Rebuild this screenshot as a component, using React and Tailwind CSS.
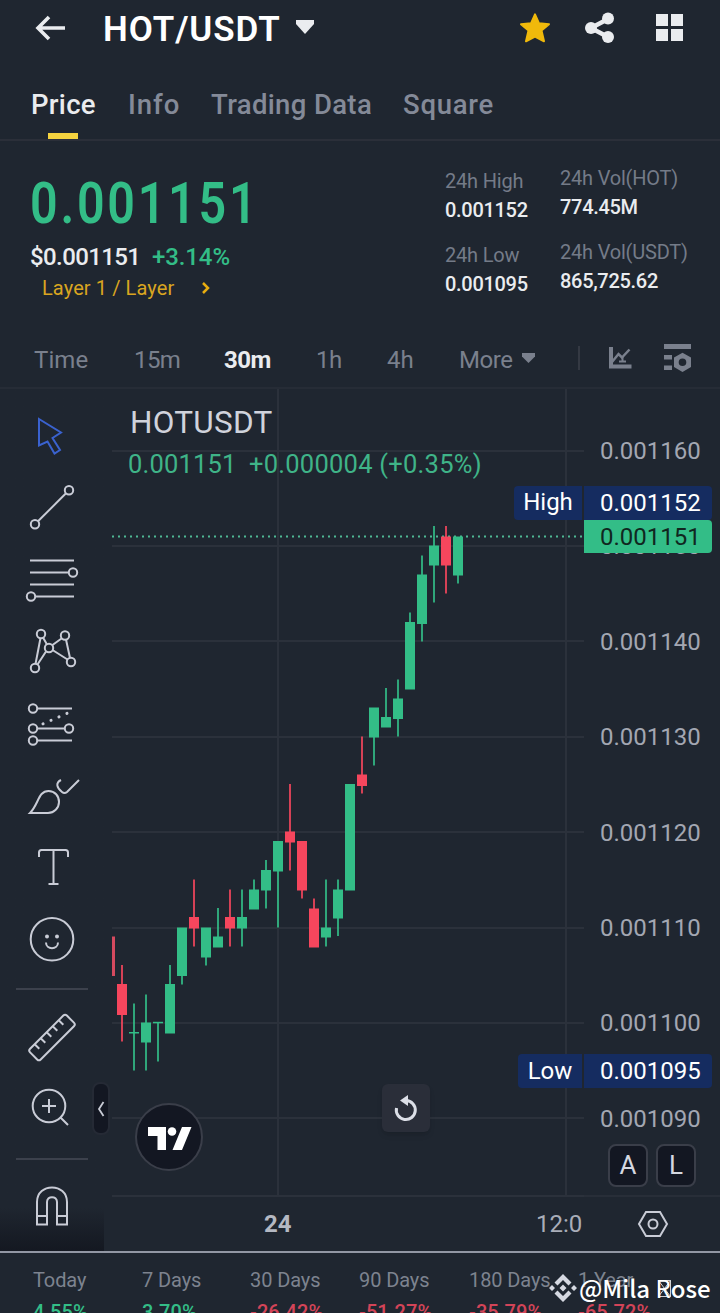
import React from "react";

const UP = "#33bd87";
const DOWN = "#f6465d";

// x, wick top, wick bottom, body top, body bottom, rising
const candles = [
  [122, 965, 1041.5, 984, 1015, 0],
  [134, 1003.5, 1070.5, 1032, 1033.5, 1],
  [146, 994.5, 1070.5, 1022.5, 1042.5, 1],
  [158, 1022, 1061.5, 1021.8, 1023.3, 1],
  [170, 965, 1033, 984, 1033.5, 1],
  [182, 928, 984.5, 927.5, 976, 1],
  [194, 879.5, 946.5, 917, 928.5, 0],
  [206, 928, 965.5, 927.5, 957.5, 1],
  [218, 908, 947, 936.5, 947.5, 1],
  [230, 889.5, 946.5, 917, 928.5, 0],
  [242, 889.5, 946.5, 917, 928.5, 1],
  [254, 879.5, 909, 889.5, 909.5, 1],
  [266, 860, 908.5, 870, 890.5, 1],
  [278, 842, 927.5, 841, 871.5, 1],
  [290, 784, 870.5, 831.5, 842.5, 0],
  [302, 842, 898.5, 841, 890.5, 0],
  [314, 898.5, 947, 908.5, 947.5, 0],
  [326, 879.5, 946.5, 927.5, 937.5, 1],
  [338, 879.5, 936, 889.5, 918.5, 1],
  [350, 785, 890, 784, 890.5, 1],
  [362, 736.5, 793.5, 774.5, 786, 0],
  [374, 708, 765.5, 707.5, 737.5, 1],
  [386, 688, 727, 717, 727.5, 1],
  [398, 679.5, 736.5, 698.5, 719, 1],
  [410, 612.5, 689, 622, 689.5, 1],
  [422, 555.5, 641.5, 574.5, 624, 1],
  [434, 526, 602.5, 545.5, 565.5, 1],
  [446, 526, 593.5, 536.5, 565.5, 0],
  [458, 537, 583.5, 536.5, 575.5, 1],
];

const levels = ["0.001160", "0.001150", "0.001140", "0.001130", "0.001120", "0.001110", "0.001100", "0.001090"];

function Header() {
  return (
    <header className="flex h-[60px] shrink-0 items-center pl-[34px] text-[#eaecef]">
      <svg className="-mt-1 mr-[37px] h-7 w-8 shrink-0" viewBox="0 0 32 28" fill="none" stroke="currentColor" strokeWidth="3.6">
        <path d="M15 3 L4 14 L15 25 M4 14 H31" />
      </svg>
      <h1 className="w-[192px] text-[35px] leading-[60px] font-semibold tracking-[0.9px] whitespace-nowrap text-white">HOT/USDT</h1>
      <svg className="-mt-1.5 h-4 w-5" viewBox="0 0 20 16" fill="currentColor"><path d="M1 1H19V5L10 15L1 5Z" /></svg>
      <svg className="-mt-1 ml-[204px] h-8 w-8" viewBox="0 0 32 32" fill="#f0b90b" stroke="#f0b90b" strokeWidth="2" strokeLinejoin="round">
        <path d="M16 2.3 L20 11.3 L30 12.2 L22.5 18.5 L25 29.3 L16 24.5 L7 29.3 L9.500 18.500 L2 12.2 L12 11.3Z" />
      </svg>
      <svg className="-mt-1 ml-[33px] h-8 w-8" viewBox="0 0 32 32" fill="currentColor">
        <path d="M7 16 L24 7 M7 16 L24 25" stroke="currentColor" strokeWidth="4.5" />
        <circle cx="7" cy="16" r="6" /><circle cx="24" cy="6.500" r="6" /><circle cx="24" cy="25" r="6" />
      </svg>
      <svg className="-mt-1 ml-[40px] h-7 w-7" viewBox="0 0 28 28" fill="currentColor">
        <path d="M0 0H12V12H0ZM15 0H27V12H15ZM0 15H12V27H0ZM15 15H27V27H15Z" />
      </svg>
    </header>
  );
}

function Tabs() {
  return (
    <nav className="flex h-[81px] shrink-0 border-b-2 border-[#2b2f39] pl-8 text-[27.5px] leading-[90px] font-medium tracking-[0.3px] whitespace-nowrap text-[#848a98]">
      <div className="relative -ml-px w-[97px] text-[#eaecef]">
        Price
        <span className="absolute bottom-0 left-[17px] h-[6px] w-[30px] bg-[#f5d33f]" />
      </div>
      <div className="w-[83px] tracking-[1px]">Info</div>
      <div className="w-48 tracking-[0.35px]">Trading Data</div>
      <div className="tracking-[0.75px]">Square</div>
    </nav>
  );
}

function Stat({ label, value, className }) {
  return (
    <div className={className}>
      <div className="text-[20px] leading-[26px] tracking-[-0.2px] text-[#747b88]">{label}</div>
      <div className="mt-[3px] text-[20px] leading-[26px] font-medium tracking-[-0.3px] text-[#eaecef]">{value}</div>
    </div>
  );
}

function Summary() {
  return (
    <section className="flex h-[187px] shrink-0 whitespace-nowrap">
      <div className="w-[445px] pt-8 pl-[30px]">
        <div className="h-[60px] origin-left scale-x-[0.85] text-[57px] leading-[61px] font-semibold tracking-[3.200px] text-[#33bd87]">0.001151</div>
        <div className="mt-[10px] flex h-7 pl-px text-[24px] leading-7 font-medium tracking-[-0.6px]">
          <span className="-ml-px w-[122px] text-[#eaecef]">$0.001151</span>
          <span className="tracking-[-0.1px] text-[#33bd87]">+3.14%</span>
        </div>
        <div className="mt-[3px] flex h-7 items-center pl-3 text-[20px] leading-7 text-[#d9a520]">
          <span className="w-[159px] tracking-[0.1px]">Layer 1 / Layer</span>
          <svg className="h-3.5 w-2.5" viewBox="0 0 10 14" fill="none" stroke="#e8ad10" strokeWidth="2.5"><path d="M2 2 L7 7 L2 12" /></svg>
        </div>
      </div>
      <div className="w-[115px] pt-[27px]">
        <Stat className="h-[74px]" label="24h High" value="0.001152" />
        <Stat label="24h Low" value="0.001095" />
      </div>
      <div className="pt-6">
        <Stat className="h-[74px]" label="24h Vol(HOT)" value="774.45M" />
        <Stat label="24h Vol(USDT)" value="865,725.62" />
      </div>
    </section>
  );
}

function Intervals() {
  return (
    <div className="flex h-[61px] shrink-0 items-center border-b-2 border-[#262c36] pt-[4px] pl-[34px] text-[24px] whitespace-nowrap text-[#7a808d]">
      <span className="w-[100px] tracking-[0.1px]">Time</span>
      <span className="w-[90px] tracking-[-0.6px]">15m</span>
      <span className="w-[92px] font-bold tracking-[-0.5px] text-[#eaecef]">30m</span>
      <span className="w-[71px] tracking-[-0.5px]">1h</span>
      <span className="w-[72px]">4h</span>
      <span className="w-[62px] tracking-[-0.4px]">More</span>
      <svg className="-mt-1 h-3 w-4" viewBox="0 0 16 12" fill="currentColor"><path d="M1 1H14V4.5L7.5 11L1 4.5Z" /></svg>
      <span className="-mt-1 ml-[41px] h-6 w-0.5 bg-[#343943]" />
      <svg className="-mt-1 ml-[29px] h-6 w-6" viewBox="0 0 24 24" fill="none" stroke="currentColor">
        <path d="M2 1V20.500H22.500" strokeWidth="4" /><path d="M3 16 L9.500 8 L13 11.500 L20.500 3.500" strokeWidth="2.5" /><path d="M13.500 11V15.500M10 15.500H17" strokeWidth="2" />
      </svg>
      <svg className="-mt-1 ml-[30px] h-[30px] w-[30px]" viewBox="0 0 30 30" fill="currentColor">
        <path d="M1 1H28V6H1ZM1 12H9V16.500H1ZM1 22.500H9V27H1Z" />
        <path fillRule="evenodd" d="M19.500 9.800 L28 14.500 V24 L19.500 29 L11 24 V14.500ZM19.500 15.500 A3.800 3.800 0 1 0 19.500 23.100 A3.800 3.800 0 1 0 19.500 15.500Z" />
      </svg>
    </div>
  );
}

function Tool({ children, className }) {
  return (
    <svg className={`size-14 shrink-0 ${className}`} viewBox="0 0 56 56" fill="none" stroke="currentColor" strokeWidth="2">
      {children}
    </svg>
  );
}

function ToolRail() {
  return (
    <aside className="flex h-[862px] w-[104px] shrink-0 flex-col bg-linear-to-b from-[#1f2630] from-95% to-[#141821] pl-6 text-[#c9ccd6]">
      <Tool className="mt-[20px] text-[#3a62cf]">
        <path d="M15 10 L37 23.500 L28.500 29 L36 41 L30.500 44.500 L23.500 32.500 L15 36.500Z" />
      </Tool>
      <Tool className="mt-[12px]">
        <circle cx="45" cy="13.300" r="4.200" /><circle cx="11" cy="47.300" r="4.200" /><path d="M42 16.300 L14 44.300" />
      </Tool>
      <Tool className="mt-5">
        <path d="M6 7.500H50M6 19.500H44.500M6 31.500H50M11 43.500H50" /><circle cx="49" cy="19.500" r="4.200" /><circle cx="7" cy="43.500" r="4.200" />
      </Tool>
      <Tool className="mt-[15px]">
        <circle cx="17" cy="10" r="4.200" /><circle cx="41" cy="11.500" r="4.200" /><circle cx="25" cy="24" r="4.200" /><circle cx="47" cy="38" r="4.200" /><circle cx="11" cy="44" r="4.200" />
        <path d="M19 13.500 L23 20.500 M37.500 14.500 L28.500 21 M42 15.500 L46 34 M28.500 26 L43.500 35.500 M22 27.500 L13.500 40.500 M16.500 14 L11.500 40" />
      </Tool>
      <Tool className="mt-4">
        <path d="M13 12.500H48M13 32.500H41M13 44.500H48" /><circle cx="9" cy="12.500" r="4.200" /><circle cx="9" cy="32.500" r="4.200" /><circle cx="45" cy="32.500" r="4.200" /><circle cx="9" cy="44.500" r="4.200" />
        <path d="M19 27.800 L46 16" strokeWidth="3" strokeLinecap="round" strokeDasharray="0.1 8.600" />
      </Tool>
      <Tool className="mt-5">
        <path d="M6 41 C15 32 14 19 24.500 19 C31 19 35 24 35 30 C35 36 30 41 24 41Z" />
        <path d="M37 8 C31 11 33 16 38 20 C40 21.700 41 21.700 43 20 L55 8" />
      </Tool>
      <Tool className="mt-[15px]">
        <path d="M15 14 V9.500 Q15 7 17.500 7 H41.500 Q44 7 44 9.500 V14 M29.500 7 V41 M24.500 41H34.500" />
      </Tool>
      <Tool className="mt-4">
        <circle cx="28" cy="24.300" r="21.300" /><circle cx="23" cy="21.500" r="2" fill="currentColor" stroke="none" /><circle cx="33" cy="21.500" r="2" fill="currentColor" stroke="none" /><path d="M22 27.500 C22 35 34 35 34 27.500" />
      </Tool>
      <div className="-ml-2 mt-[17px] h-0.5 w-[72px] shrink-0 bg-[#3c414c]" />
      <Tool className="mt-[18px]">
        <g transform="translate(28 29.500) rotate(-45)"><rect x="-26" y="-7.500" width="52" height="15" rx="2.500" /><path d="M-17 -7.500V-1M-8.500 -7.500V-1M0 -7.500V-1M8.500 -7.500V-1M17 -7.500V-1" /></g>
      </Tool>
      <Tool className="mt-[17px]">
        <circle cx="25" cy="25" r="16.300" /><path d="M25 18V32M18 25H32M36.500 36.500 L44 44" />
      </Tool>
      <div className="-ml-2 mt-[21px] h-0.5 w-[72px] shrink-0 bg-[#3c414c]" />
      <Tool className="mt-[19px]">
        <path d="M13 45.500 V23 C13 3.500 43 3.500 43 23 V45.500 H33 V23 C33 16.500 23 16.500 23 23 V45.500Z M13 37H23M33 37H43" />
      </Tool>
    </aside>
  );
}

function Plot() {
  return (
    <svg className="block h-[862px] w-[480px]" viewBox="104 389 480 862">
      <g stroke="#2b313b" strokeWidth="2">
        {levels.map((l, i) => (<path key={l} d={`M112 ${Math.round(450.500 + i * 95.400)}H584`} />))}
        <path d="M278 389V1196M566 389V1196M112 1196H584" />
      </g>
      <path d="M112 536.500H584" stroke="#4fb893" strokeWidth="2" strokeDasharray="2 4" />
      <rect x="112" y="936.500" width="3" height="39.500" fill="#d54a5f" />
      {candles.map(([x, wt, wb, bt, bb, up]) => (
        <g key={x} fill={up ? UP : DOWN}>
          <rect x={x - 1} y={wt} width="2" height={wb - wt} opacity="0.85" />
          <rect x={x - 5} y={bt} width="10" height={bb - bt} />
        </g>
      ))}
    </svg>
  );
}

function PriceTag({ label, value, className, labelClass }) {
  return (
    <div className={`absolute flex h-[34px] gap-0.5 text-[24px] text-white ${className}`}>
      <span className={`rounded-l-[4px] bg-[#152c60] text-center ${labelClass}`}>{label}</span>
      <span className="w-32 rounded-r-[4px] bg-[#152c60] pl-4 leading-[35px]">{value}</span>
    </div>
  );
}

function Chart() {
  return (
    <section className="relative flex h-[862px] shrink-0 whitespace-nowrap">
      <ToolRail />
      <div className="relative w-[480px] shrink-0">
        <Plot />
        <div className="absolute top-[12px] left-[26px] text-[31.500px] leading-[43px] tracking-[0.25px] text-[#d0d3dc]">HOTUSDT</div>
        <div className="absolute top-[58px] left-6 flex text-[25.500px] leading-[34px] text-[#3fb488]">
          <span className="w-[121px] tracking-[0.2px]">0.001151</span><span className="tracking-[0.25px]">+0.000004 (+0.35%)</span>
        </div>
        <div className="absolute top-[819px] left-[160px] text-[24px] leading-[33px] font-bold text-[#b4b8c2]">24</div>
        <div className="absolute top-[819px] left-[432px] w-[46px] overflow-hidden text-[24px] leading-[33px] text-[#a9adb8]">12:00</div>
        <div className="absolute top-[714px] left-[31px] size-[68px] rounded-full border-2 border-[#3a3e49] bg-[#131722]">
          <svg className="size-16" viewBox="137 1105 64 64" fill="#fff"><path d="M148 1127H166V1150H157.500V1136H148ZM182 1127H191.500L182 1150H172.500Z" /><circle cx="172" cy="1131.500" r="4.300" /></svg>
        </div>
        <div className="absolute top-[695px] left-[278px] flex size-12 items-center justify-center rounded-md bg-[#2a2e39] text-[#dcdfe7] shadow-md">
          <svg className="size-8" viewBox="390 1092 32 32" fill="none" stroke="currentColor" strokeWidth="3"><path d="M396.500 1108 A9.500 9.500 0 1 0 406 1100.500" /><path d="M400 1100.500 L408 1095 V1106Z" fill="currentColor" stroke="none" /></svg>
        </div>
      </div>
      <div className="flex h-[862px] w-[136px] flex-col">
        <div className="h-[808px] border-b-2 border-[#282e38] pt-[15px] pl-4 text-[24px] leading-[95.400px] text-[#a3a7b2]">
          {levels.map((l) => (<div key={l} className="h-[95.400px]">{l}</div>))}
        </div>
        <div className="flex h-[54px] items-center pl-[53px] text-[#c9ccd6]">
          <svg className="h-7 w-8" viewBox="0 0 32 28" fill="none" stroke="currentColor" strokeWidth="2"><path d="M9 2H23L30 14L23 26H9L2 14Z" /><circle cx="16" cy="14" r="4.500" /></svg>
        </div>
      </div>
      <PriceTag className="top-[97px] left-[514px]" labelClass="w-[68px] leading-[32px]" label="High" value="0.001152" />
      <PriceTag className="top-[665px] left-[518px]" labelClass="w-16 leading-[35px]" label="Low" value="0.001095" />
      <div className="absolute top-[131px] left-[584px] h-[33px] w-32 rounded-r-[4px] bg-[#33bd87] pl-4 text-[24px] leading-[35px] text-[#10271f]">0.001151</div>
      <div className="absolute top-[755px] left-[608px] flex gap-2 text-center text-[26px] leading-[39px] text-[#d5d8e0]">
        <span className="h-[43px] w-10 rounded-lg border-2 border-[#3a3e49] bg-[#131722]">A</span>
        <span className="h-[43px] w-10 rounded-lg border-2 border-[#3a3e49] bg-[#131722]">L</span>
      </div>
      <div className="absolute top-[693px] left-[92px] flex h-[53px] w-[18px] items-center justify-center rounded-lg border-2 border-[#252a35] bg-[#131722]">
        <svg className="h-4 w-2" viewBox="0 0 8 16" fill="none" stroke="#c9ccd6" strokeWidth="1.800"><path d="M6.500 1 L2 8 L6.500 15" /></svg>
      </div>
    </section>
  );
}

const periods = [
  ["Today", "4.55%", "w-[109px]", "text-[#33bd87]"],
  ["7 Days", "3.70%", "w-[108px]", "text-[#33bd87]"],
  ["30 Days", "-26.42%", "w-[109px]", "text-[#d34458]"],
  ["90 Days", "-51.27%", "w-[110px]", "text-[#d34458]"],
  ["180 Days", "-35.79%", "w-[109px]", "text-[#d34458]"],
  ["1 Year", "-65.72%", "w-[90px]", "text-[#d34458]"],
];

function Performance() {
  return (
    <footer className="relative flex h-[62px] shrink-0 overflow-hidden border-t-2 border-[#9297a4] pl-[33px] text-[20px] whitespace-nowrap">
      {periods.map(([name, change, width, tone]) => (
        <div key={name} className={`shrink-0 ${width}`}>
          <div className="mt-[14px] leading-[26px] tracking-[-0.1px] text-[#7d838f]">{name}</div>
          <div className={`mt-[6px] leading-[26px] font-medium tracking-[0.1px] ${tone}`}>{change}</div>
        </div>
      ))}
      <div className="absolute top-[16px] left-[548px] flex items-center gap-px text-white">
        <svg className="size-[30px]" viewBox="0 0 30 30" fill="#d5d8e1">
          <path d="M15 1 L23.500 9.500 L20.500 12.500 L15 7 L9.500 12.500 L6.500 9.500ZM15 29 L23.500 20.500 L20.500 17.500 L15 23 L9.500 17.500 L6.500 20.500ZM15 11.500 L18.500 15 L15 18.500 L11.500 15ZM4 12 L7 15 L4 18 L1 15ZM26 12 L29 15 L26 18 L23 15Z" />
        </svg>
        <span className="relative font-['Noto_Sans_CJK_SC','Noto_Sans',sans-serif] text-[24px] leading-[38px] font-medium">
          @Mila <span className="font-normal">R</span>ose
          <svg className="absolute top-[11px] left-[79px] h-[17px] w-[13px]" viewBox="0 0 13 17" fill="none" stroke="#fff" strokeWidth="0.800"><path d="M0.500 0.500H12.500V16.500H0.500ZM0.500 0.500L12.500 16.500M12.500 0.500L0.500 16.500" /></svg>
        </span>
      </div>
    </footer>
  );
}

export default function App() {
  return (
    <main className="flex h-[1313px] w-[720px] flex-col overflow-hidden bg-[#1f2630] font-['Roboto','Liberation_Sans',sans-serif]">
      <Header />
      <Tabs />
      <Summary />
      <Intervals />
      <Chart />
      <Performance />
    </main>
  );
}
